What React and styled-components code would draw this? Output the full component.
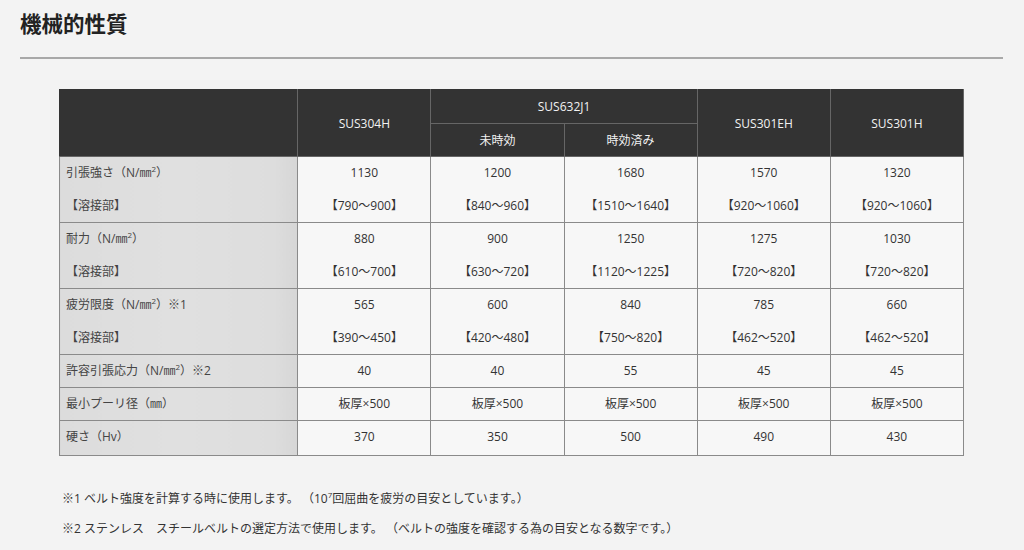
import React from "react";
import styled, { createGlobalStyle } from "styled-components";

const GlobalStyle = createGlobalStyle`
  html, body {
    margin: 0;
    padding: 0;
    background: #f3f3f3;
  }
  body {
    font-family: "Open Sans", "Noto Sans CJK JP", sans-serif;
    color: #333;
  }
`;

const columns = ["SUS304H", "未時効", "時効済み", "SUS301EH", "SUS301H"];

const rows = [
  {
    label: ["引張強さ（N/㎜", "2", "）"],
    sub: "【溶接部】",
    values: ["1130", "1200", "1680", "1570", "1320"],
    welds: ["【790〜900】", "【840〜960】", "【1510〜1640】", "【920〜1060】", "【920〜1060】"],
  },
  {
    label: ["耐力（N/㎜", "2", "）"],
    sub: "【溶接部】",
    values: ["880", "900", "1250", "1275", "1030"],
    welds: ["【610〜700】", "【630〜720】", "【1120〜1225】", "【720〜820】", "【720〜820】"],
  },
  {
    label: ["疲労限度（N/㎜", "2", "）※1"],
    sub: "【溶接部】",
    values: ["565", "600", "840", "785", "660"],
    welds: ["【390〜450】", "【420〜480】", "【750〜820】", "【462〜520】", "【462〜520】"],
  },
  {
    label: ["許容引張応力（N/㎜", "2", "）※2"],
    values: ["40", "40", "55", "45", "45"],
  },
  {
    label: ["最小プーリ径（㎜）"],
    values: ["板厚×500", "板厚×500", "板厚×500", "板厚×500", "板厚×500"],
  },
  {
    label: ["硬さ（Hv）"],
    values: ["370", "350", "500", "490", "430"],
  },
];

const App = () => {
  return (
    <>
      <GlobalStyle />
      <Page>
        <Title>機械的性質</Title>
        <Rule />
        <Table>
          <colgroup>
            <col style={{ width: "238px" }} />
            {columns.map((c) => (
              <col key={c} style={{ width: "133px" }} />
            ))}
          </colgroup>
          <thead>
            <tr>
              <HeadCell rowSpan={2}></HeadCell>
              <HeadCell rowSpan={2}>SUS304H</HeadCell>
              <HeadCell colSpan={2}>SUS632J1</HeadCell>
              <HeadCell rowSpan={2}>SUS301EH</HeadCell>
              <HeadCell rowSpan={2}>SUS301H</HeadCell>
            </tr>
            <tr>
              <HeadCell>未時効</HeadCell>
              <HeadCell>時効済み</HeadCell>
            </tr>
          </thead>
          <tbody>
            {rows.map((row, i) => {
              const double = Boolean(row.sub);
              return (
                <tr key={i}>
                  <LabelCell>
                    <Line $double={double}>
                      {row.label[0]}
                      {row.label[1] && <sup>{row.label[1]}</sup>}
                      {row.label[2]}
                    </Line>
                    {double && <Line $double>{row.sub}</Line>}
                  </LabelCell>
                  {row.values.map((v, j) => (
                    <DataCell key={j}>
                      <Line $double={double}>{v}</Line>
                      {double && <Line $double>{row.welds[j]}</Line>}
                    </DataCell>
                  ))}
                </tr>
              );
            })}
          </tbody>
        </Table>
        <Notes>
          <Note>
            ※1 ベルト強度を計算する時に使用します。 （10<sup>7</sup>回屈曲を疲労の目安としています。）
          </Note>
          <Note>
            ※2 ステンレス　スチールベルトの選定方法で使用します。 （ベルトの強度を確認する為の目安となる数字です。）
          </Note>
        </Notes>
      </Page>
    </>
  );
};

const Page = styled.div`
  width: 1024px;
  height: 550px;
  padding: 7px 20px 0 20px;
  box-sizing: border-box;
  overflow: hidden;
`;

const Title = styled.h2`
  margin: 0;
  font-family: "Noto Sans CJK JP", sans-serif;
  font-size: 21.5px;
  font-weight: bold;
  line-height: 32px;
  color: #222;
`;

const Rule = styled.hr`
  margin: 18px 0 0 0;
  border: none;
  border-top: 2px solid #a8a8a8;
  width: 983px;
`;

const Table = styled.table`
  margin: 30px 0 0 39px;
  width: 905px;
  border-collapse: collapse;
  table-layout: fixed;
  font-size: 12px;

  sup {
    font-size: 8px;
    line-height: 0;
    vertical-align: 5px;
  }

  tbody tr:last-child td {
    padding-bottom: 2px;
  }
`;

const HeadCell = styled.th`
  background: #333333;
  color: #f2f2f2;
  font-weight: normal;
  height: 32.5px;
  padding: 0;
  text-align: center;
  border: 1px solid #666;
  border-top-color: #333;
  &:first-child {
    border-left-color: #333;
  }
`;

const LabelCell = styled.td`
  background: linear-gradient(to right, #dcdcdc, #e0e0e0 50%, #dddddd 90%, #d6d6d6);
  color: #444;
  padding: 0 0 0 6px;
  text-align: left;
  border: 1px solid #8a8a8a;
`;

const DataCell = styled.td`
  background: #f7f7f7;
  color: #333;
  padding: 0;
  text-align: center;
  border: 1px solid #8a8a8a;
`;

const Line = styled.div`
  height: ${(p) => (p.$double ? "32.5px" : "32px")};
  line-height: ${(p) => (p.$double ? "32.5px" : "32px")};
  white-space: nowrap;
`;

const Notes = styled.div`
  margin: 28px 0 0 42px;
  font-size: 12px;
  color: #333;

  sup {
    font-size: 8px;
    line-height: 0;
    vertical-align: 5px;
  }
`;

const Note = styled.p`
  margin: 0;
  line-height: 30px;
`;

export default App;
